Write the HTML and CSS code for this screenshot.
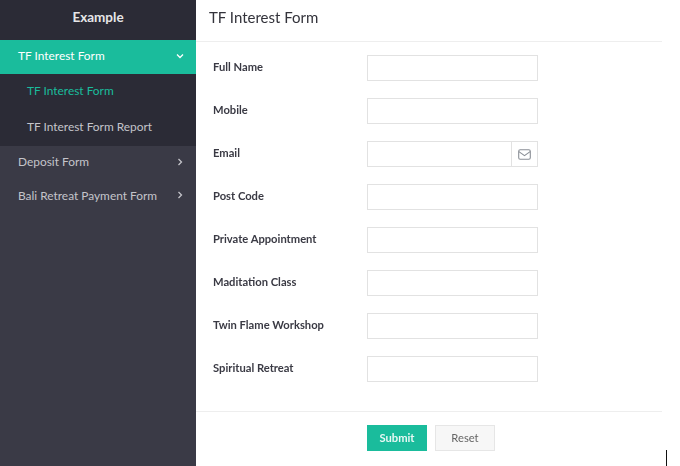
FILE: index.html
```html
<!DOCTYPE html>
<html lang="en">
<head>
    <meta charset="UTF-8">
    <meta name="viewport" content="width=device-width, initial-scale=1.0">
    <title>TF Interest Form</title>
    <link rel="stylesheet" href="styles.css">
</head>
<body>
    <div class="layout">
        <aside class="sidebar">
            <div class="brand">Example</div>
            <div class="menu-item active">
                <span>TF Interest Form</span>
                <svg class="chevron" width="8" height="8" viewBox="0 0 8 8"><path d="M1 2.5 L4 5.5 L7 2.5"/></svg>
            </div>
            <div class="submenu">
                <div class="submenu-item current">TF Interest Form</div>
                <div class="submenu-item">TF Interest Form Report</div>
            </div>
            <div class="menu-item">
                <span>Deposit Form</span>
                <svg class="chevron" width="8" height="8" viewBox="0 0 8 8"><path d="M2.5 1 L5.5 4 L2.5 7"/></svg>
            </div>
            <div class="menu-item">
                <span>Bali Retreat Payment Form</span>
                <svg class="chevron" width="8" height="8" viewBox="0 0 8 8"><path d="M2.5 1 L5.5 4 L2.5 7"/></svg>
            </div>
        </aside>

        <main class="content">
            <h1 class="page-title">TF Interest Form</h1>

            <form class="form">
                <div class="fields">
                    <div class="form-row">
                        <label class="form-label">Full Name</label>
                        <input class="form-input" type="text">
                    </div>
                    <div class="form-row">
                        <label class="form-label">Mobile</label>
                        <input class="form-input" type="text">
                    </div>
                    <div class="form-row">
                        <label class="form-label">Email</label>
                        <div class="input-group">
                            <input class="form-input grouped" type="text">
                            <span class="addon">
                                <svg width="13" height="11" viewBox="0 0 13 11"><rect x="0.7" y="0.7" width="11.6" height="9.6" rx="1.5"/><path d="M0.9 2.6 L6.5 6.6 L12.1 2.6"/></svg>
                            </span>
                        </div>
                    </div>
                    <div class="form-row">
                        <label class="form-label">Post Code</label>
                        <input class="form-input" type="text">
                    </div>
                    <div class="form-row">
                        <label class="form-label">Private Appointment</label>
                        <input class="form-input" type="text">
                    </div>
                    <div class="form-row">
                        <label class="form-label">Maditation Class</label>
                        <input class="form-input" type="text">
                    </div>
                    <div class="form-row">
                        <label class="form-label">Twin Flame Workshop</label>
                        <input class="form-input" type="text">
                    </div>
                    <div class="form-row">
                        <label class="form-label">Spiritual Retreat</label>
                        <input class="form-input" type="text">
                    </div>
                </div>

                <div class="form-footer">
                    <button type="button" class="btn btn-submit">Submit</button>
                    <button type="button" class="btn btn-reset">Reset</button>
                </div>
            </form>
        </main>

        <div class="edge">
            <span class="caret"></span>
        </div>
    </div>
</body>
</html>
```

FILE: styles.css
```css
body{
    margin: 0;
    background-color: white;
    font-family: Lato, "Open Sans", Arial, sans-serif;
    color: #3a3a44;
}

.layout{
    display: flex;
    width: 680px;
    height: 466px;
    overflow: hidden;
    filter: blur(0.35px);
}

.sidebar{
    width: 196px;
    flex-shrink: 0;
    background-color: #3a3a46;
    color: #c4c4ca;
    font-size: 11.9px;
}
.brand{
    height: 40px;
    padding-bottom: 7px;
    box-sizing: border-box;
    display: flex;
    align-items: center;
    justify-content: center;
    background-color: #2b2b36;
    color: #e6e6e8;
    font-size: 13.5px;
    font-weight: bold;
}
.menu-item{
    display: flex;
    align-items: center;
    justify-content: space-between;
    height: 33.5px;
    box-sizing: border-box;
    padding: 0 12px 2px 18px;
}
.menu-item.active{
    background-color: #1abc9c;
    color: white;
}
.chevron{
    fill: none;
    stroke: currentColor;
    stroke-width: 1.3;
}
.submenu{
    background-color: #2b2b36;
    padding-top: 0.5px;
}
.submenu-item{
    height: 36px;
    box-sizing: border-box;
    padding: 0 0 4px 27px;
    display: flex;
    align-items: center;
}
.submenu-item.current{
    color: #1abc9c;
}

.content{
    width: 466px;
    flex-shrink: 0;
}
.page-title{
    margin: 0;
    height: 42px;
    box-sizing: border-box;
    padding: 8px 0 0 13px;
    border-bottom: 1px solid #eeeeee;
    font-size: 15px;
    font-weight: normal;
    color: #33333b;
}
.fields{
    height: 369px;
    box-sizing: border-box;
    padding-top: 13px;
}
.form-row{
    display: flex;
    height: 43px;
    padding-left: 17px;
}
.form-label{
    width: 154px;
    padding-top: 4.5px;
    font-size: 11.2px;
    font-weight: bold;
}
.form-input{
    width: 171px;
    height: 26px;
    box-sizing: border-box;
    border: 1px solid #e2e2e2;
    background-color: white;
    padding: 0 8px;
}
.input-group{
    display: flex;
    width: 171px;
    height: 26px;
}
.form-input.grouped{
    flex: 1;
    width: auto;
    min-width: 0;
}
.addon{
    width: 26px;
    box-sizing: border-box;
    border: 1px solid #e2e2e2;
    border-left: none;
    display: flex;
    align-items: center;
    justify-content: center;
}
.addon svg{
    fill: none;
    stroke: #8a8f96;
    stroke-width: 1.1;
}
.form-footer{
    display: flex;
    gap: 8px;
    border-top: 1px solid #eeeeee;
    padding: 13px 0 0 171px;
}
.btn{
    width: 60px;
    height: 26px;
    font-family: inherit;
    font-size: 11.2px;
    padding: 0 0 2px;
}
.btn-submit{
    background-color: #1abc9c;
    border: 1px solid #1abc9c;
    color: #e8f8f4;
    font-weight: bold;
}
.btn-reset{
    background-color: #f7f7f7;
    border: 1px solid #e6e6e6;
    color: #666666;
}

.edge{
    flex: 1;
    position: relative;
}
.caret{
    position: absolute;
    left: 4px;
    bottom: 0;
    width: 1px;
    height: 16px;
    background-color: #111111;
}
```
